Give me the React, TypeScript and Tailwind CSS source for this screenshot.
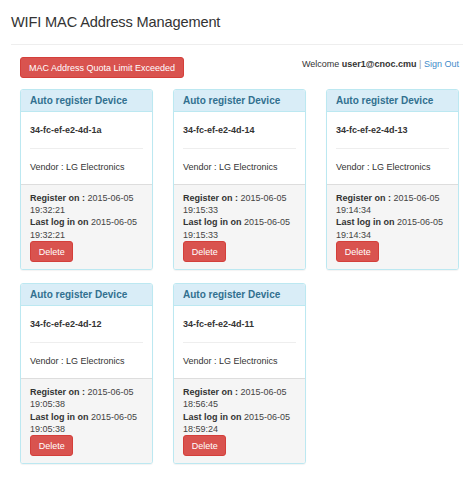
import React from "react";

type Device = { mac: string; reg: [string, string]; last: [string, string] };

const devices: Device[] = [
  { mac: "34-fc-ef-e2-4d-1a", reg: ["2015-06-05", "19:32:21"], last: ["2015-06-05", "19:32:21"] },
  { mac: "34-fc-ef-e2-4d-14", reg: ["2015-06-05", "19:15:33"], last: ["2015-06-05", "19:15:33"] },
  { mac: "34-fc-ef-e2-4d-13", reg: ["2015-06-05", "19:14:34"], last: ["2015-06-05", "19:14:34"] },
  { mac: "34-fc-ef-e2-4d-12", reg: ["2015-06-05", "19:05:38"], last: ["2015-06-05", "19:05:38"] },
  { mac: "34-fc-ef-e2-4d-11", reg: ["2015-06-05", "18:56:45"], last: ["2015-06-05", "18:59:24"] },
];

function Card({ d }: { d: Device }) {
  return (
    <div className="w-[133px] border border-[#bce8f1] rounded-[3px] bg-white shadow-[0_1px_1px_rgba(0,0,0,0.05)] overflow-hidden">
      <div className="h-[22px] bg-[#d9edf7] border-b border-[#bce8f1] px-[9px] flex items-center text-[10px] font-bold text-[#31708f]">
        Auto register Device
      </div>
      <div className="px-[9px] pt-[12px] pb-[11px]">
        <div className="text-[9px] leading-[12px] font-bold text-[#333]">{d.mac}</div>
        <div className="mt-[12px] border-t border-[#eeeeee]" />
        <div className="mt-[12px] text-[9px] leading-[12px] text-[#333]">Vendor : LG Electronics</div>
      </div>
      <div className="bg-[#f5f5f5] border-t border-[#dddddd] px-[9px] pt-[6.6px] pb-[7px]">
        <div className="text-[9px] leading-[12.4px] text-[#444]">
          <span className="font-bold text-[#333]">Register on : </span>
          {d.reg[0]}
          <br />
          {d.reg[1]}
          <br />
          <span className="font-bold text-[#333]">Last log in on </span>
          {d.last[0]}
          <br />
          {d.last[1]}
        </div>
        <button className="h-[21px] px-[7.7px] bg-[#d9534f] border border-[#d43f3a] rounded-[3px] text-white text-[9px] leading-[12px] flex items-center">
          Delete
        </button>
      </div>
    </div>
  );
}

export default function App() {
  return (
    <div className="w-[474px] h-[478px] bg-white font-['Liberation_Sans',Arial,sans-serif] text-[#333]">
      <div className="px-[11px]">
        <h3 className="pt-[14px] h-[31px] text-[14.6px] leading-[17px] font-normal tracking-[-0.15px] text-[#333]">
          WIFI MAC Address Management
        </h3>
        <div className="mt-[13px] border-t border-[#eeeeee]" />
      </div>
      <div className="ml-[20px] w-[439px]">
        <div className="mt-[12px] flex justify-between items-start">
          <button className="h-[21px] px-[8px] bg-[#d9534f] border border-[#d43f3a] rounded-[3px] text-white text-[9px] leading-[12px] flex items-center">
            MAC Address Quota Limit Exceeded
          </button>
          <div className="mt-[1px] text-[9px] leading-[12px] text-[#333]">
            Welcome <span className="font-bold">user1@cnoc.cmu</span>{" "}
            <span className="text-[#999]">|</span>{" "}
            <span className="text-[#428bca]">Sign Out</span>
          </div>
        </div>
        <div className="mt-[11px] grid grid-cols-[133px_133px_133px] gap-x-[20px] gap-y-[13px]">
          {devices.map((d) => (
            <Card key={d.mac} d={d} />
          ))}
        </div>
      </div>
    </div>
  );
}
